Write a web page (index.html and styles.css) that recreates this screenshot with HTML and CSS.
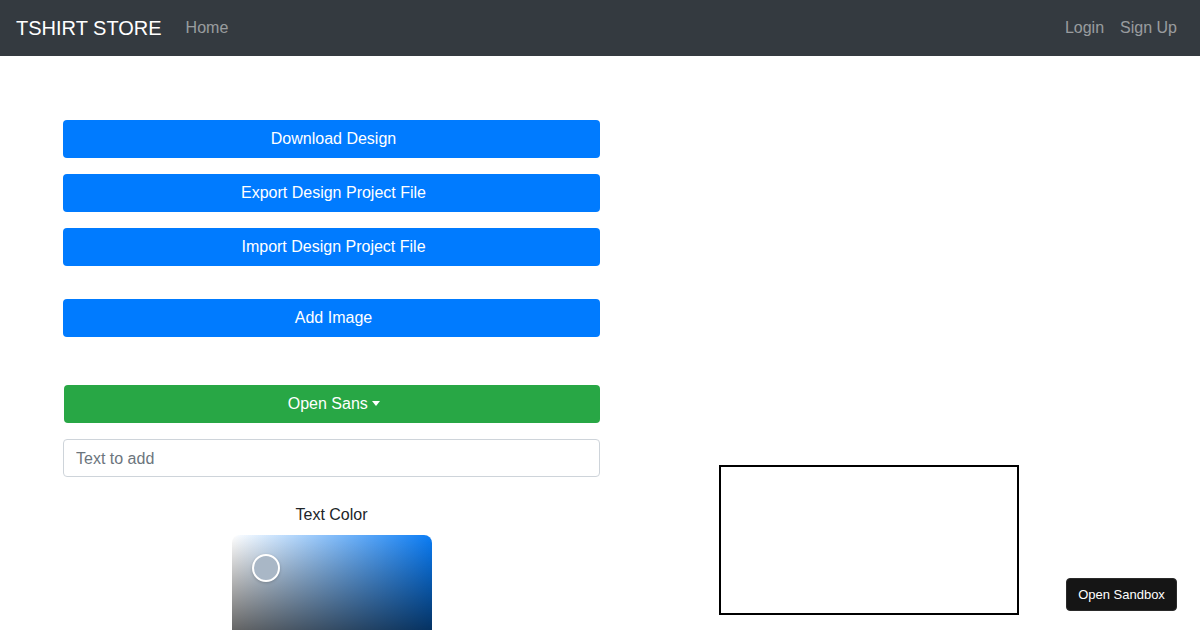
FILE: index.html
```html
<!DOCTYPE html>
<html lang="en">
<head>
  <meta charset="UTF-8">
  <meta name="viewport" content="width=device-width, initial-scale=1.0">
  <title>Tshirt Store</title>
  <link rel="stylesheet" href="styles.css">
</head>
<body>
  <nav class="navbar">
    <div class="nav-left">
      <a class="brand" href="#">TSHIRT STORE</a>
      <a class="nav-link" href="#">Home</a>
    </div>
    <div class="nav-right">
      <a class="nav-link" href="#">Login</a>
      <a class="nav-link" href="#">Sign Up</a>
    </div>
  </nav>

  <div class="designer">
    <div class="tools">
      <button class="btn btn-primary">Download Design</button>
      <button class="btn btn-primary">Export Design Project File</button>
      <button class="btn btn-primary">Import Design Project File</button>
      <button class="btn btn-primary add-image">Add Image</button>
      <button class="btn btn-success font-select">Open Sans <span class="caret"></span></button>
      <input class="text-input" type="text" placeholder="Text to add">
      <p class="label">Text Color</p>
      <div class="picker">
        <div class="picker-pointer"></div>
      </div>
    </div>
    <div class="stage">
      <div class="canvas"></div>
    </div>
  </div>

  <button class="sandbox-btn">Open Sandbox</button>
</body>
</html>
```

FILE: styles.css
```css
* {
  margin: 0;
  padding: 0;
  box-sizing: border-box;
}

body {
  font-family: 'Liberation Sans', Arial, sans-serif;
  font-size: 16px;
  line-height: 1.5;
  color: #212529;
  background: #fff;
  height: 630px;
  overflow: hidden;
}

a {
  text-decoration: none;
}

.navbar {
  height: 56px;
  background: #343a40;
  display: flex;
  justify-content: space-between;
  align-items: center;
  padding: 0 16px;
}

.nav-left, .nav-right {
  display: flex;
  align-items: center;
}

.brand {
  color: #fff;
  font-size: 20px;
  margin-right: 16px;
}

.nav-link {
  color: rgba(255, 255, 255, 0.5);
  padding: 8px;
}

.nav-right .nav-link:last-child {
  padding-right: 7px;
}

.designer {
  display: flex;
  align-items: flex-start;
  height: 574px;
  overflow: hidden;
}

.tools {
  width: 537px;
  margin-left: 63px;
  padding-top: 64px;
  display: flex;
  flex-direction: column;
  align-items: center;
}

.btn {
  width: 100%;
  height: 38px;
  border: none;
  border-radius: 4px;
  color: #fff;
  font-family: inherit;
  font-size: 16px;
  padding-left: 4px;
  margin-bottom: 16px;
  cursor: pointer;
}

.btn-primary {
  background: #007bff;
}

.add-image {
  margin-top: 17px;
}

.btn-success {
  background: #28a745;
  margin-top: 32px;
  width: 536px;
  align-self: flex-end;
}

.caret {
  display: inline-block;
  width: 0;
  height: 0;
  border-left: 4px solid transparent;
  border-right: 4px solid transparent;
  border-top: 5px solid #fff;
  vertical-align: 3px;
}

.text-input {
  width: 100%;
  height: 38px;
  border: 1px solid #ced4da;
  border-radius: 4px;
  padding: 7px 12px 5px;
  font-family: inherit;
  font-size: 16px;
  color: #495057;
}

.text-input::placeholder {
  color: #6c757d;
}

.label {
  margin-top: 26px;
  margin-bottom: 8px;
}

.picker {
  position: relative;
  width: 200px;
  height: 95px;
  flex-shrink: 0;
  border-radius: 8px 8px 0 0;
  background:
    linear-gradient(to top, rgba(0, 0, 0, 0.6), rgba(0, 0, 0, 0)),
    linear-gradient(to right, #fff, #0a7cf5);
  margin-left: 1px;
}

.picker-pointer {
  position: absolute;
  left: 20px;
  top: 19px;
  width: 28px;
  height: 28px;
  border-radius: 50%;
  border: 2px solid #fff;
  background: #a9b7c6;
  box-shadow: 0 1px 3px rgba(0, 0, 0, 0.2);
}

.stage {
  margin-left: 119px;
  padding-top: 409px;
}

.canvas {
  width: 300px;
  height: 150px;
  border: 2px solid #000;
}

.sandbox-btn {
  position: fixed;
  right: 23px;
  bottom: 19px;
  width: 111px;
  height: 33px;
  background: #151515;
  color: #fff;
  border: 1px solid #2a2a2a;
  border-radius: 4px;
  font-family: inherit;
  font-size: 13px;
}
```
